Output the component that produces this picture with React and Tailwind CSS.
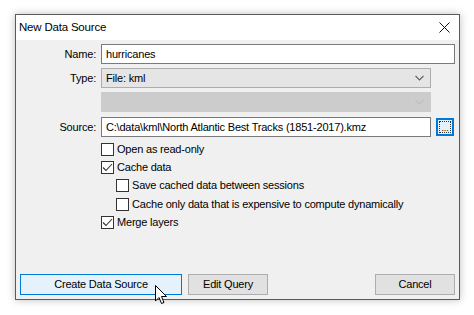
import React from 'react';

const FONT = { fontFamily: '"Segoe UI", "Liberation Sans", Arial, sans-serif', letterSpacing: '-0.2px' };

function Chevron({ color = '#606060' }) {
  return (
    <svg width="9" height="6" viewBox="0 0 9 6" fill="none">
      <path d="M0.5 1 L4.5 5 L8.5 1" stroke={color} strokeWidth="1.1" />
    </svg>
  );
}

function Checkbox({ checked, label }) {
  return (
    <div className="flex items-center h-[18.3px]">
      <div className="w-[13px] h-[13px] border border-[#333333] bg-white flex items-center justify-center shrink-0">
        {checked && (
          <svg width="11" height="9" viewBox="0 0 11 9" fill="none">
            <path d="M1 4.5 L4 7.5 L10 1" stroke="#333333" strokeWidth="1.1" />
          </svg>
        )}
      </div>
      <span className="ml-[3px] text-[11px] text-black leading-none whitespace-nowrap">{label}</span>
    </div>
  );
}

function Label({ children }) {
  return <div className="w-[85px] pr-[5px] text-right text-[11px] text-black shrink-0">{children}</div>;
}

export default function App() {
  return (
    <div className="w-[474px] h-[315px] bg-white pt-[14px] pl-[15px]" style={FONT}>
      <div className="w-[445px] h-[286px] border border-[#5a5a5a] bg-[#f0f0f0] flex flex-col shadow-[0_0_8px_rgba(0,0,0,0.25)] relative">
        {/* Title bar */}
        <div className="h-[25px] bg-white flex items-center justify-between pl-[3px] pr-[9px]">
          <span className="text-[11.5px] text-black">New Data Source</span>
          <svg width="11" height="11" viewBox="0 0 11 11">
            <path d="M0.5 0.5 L10.5 10.5 M10.5 0.5 L0.5 10.5" stroke="#111" strokeWidth="1" />
          </svg>
        </div>

        <div className="flex flex-col pt-[4px] pr-[4px]">
          <div className="flex items-center h-[20px]">
            <Label>Name:</Label>
            <div className="flex-1 h-[20px] border border-[#7a7a7a] bg-white flex items-center px-[4px] text-[11px] text-black">
              hurricanes
            </div>
          </div>

          <div className="flex items-center h-[20px] mt-[4px]">
            <Label>Type:</Label>
            <div className="w-[330px] h-[20px] border border-[#adadad] bg-[#e5e5e5] flex items-center justify-between pl-[4px] pr-[6px] text-[11px] text-black">
              <span>File: kml</span>
              <Chevron />
            </div>
          </div>

          <div className="flex items-center h-[20px] mt-[4px]">
            <Label></Label>
            <div className="w-[330px] h-[20px] border border-[#cccccc] bg-[#cccccc] flex items-center justify-end pr-[6px]">
              <Chevron color="#bfbfbf" />
            </div>
          </div>

          <div className="flex items-center h-[20px] mt-[5px]">
            <Label>Source:</Label>
            <div className="w-[330px] h-[20px] border border-[#7a7a7a] bg-white flex items-center px-[4px] text-[11px] text-black whitespace-nowrap overflow-hidden">
              C:\data\kml\North Atlantic Best Tracks (1851-2017).kmz
            </div>
            <div className="ml-[5px] w-[18px] h-[18px] border-2 border-[#0078d7] bg-[#e5f1fb] flex items-center justify-center">
              <div className="w-[12px] h-[12px] border border-dotted border-[#333] flex items-end justify-center text-[9px] leading-[8px] text-black">
                ...
              </div>
            </div>
          </div>

          <div className="flex flex-col pl-[85px] mt-[3px]">
            <Checkbox label="Open as read-only" />
            <Checkbox checked label="Cache data" />
            <div className="pl-[15px] flex flex-col">
              <Checkbox label="Save cached data between sessions" />
              <Checkbox label="Cache only data that is expensive to compute dynamically" />
            </div>
            <Checkbox checked label="Merge layers" />
          </div>
        </div>

        <div className="mt-auto flex items-center pl-[4px] pr-[4px] pb-[4px]">
          <div className="w-[162px] h-[21px] border border-[#0078d7] bg-[#e5f1fb] flex items-center justify-center text-[11px] text-black">
            Create Data Source
          </div>
          <div className="ml-[6px] w-[80px] h-[21px] border border-[#adadad] bg-[#e1e1e1] flex items-center justify-center text-[11px] text-black">
            Edit Query
          </div>
          <div className="ml-auto w-[80px] h-[21px] border border-[#adadad] bg-[#e1e1e1] flex items-center justify-center text-[11px] text-black">
            Cancel
          </div>
        </div>

        {/* mouse cursor */}
        <svg className="absolute left-[139px] top-[270px]" width="13" height="20" viewBox="0 0 13 20">
          <path d="M0.5 0.5 L0.5 16 L4 12.5 L6.5 18.5 L9 17.5 L6.5 11.5 L11.5 11.5 Z" fill="white" stroke="black" strokeWidth="1" strokeLinejoin="miter" />
        </svg>
      </div>
    </div>
  );
}
